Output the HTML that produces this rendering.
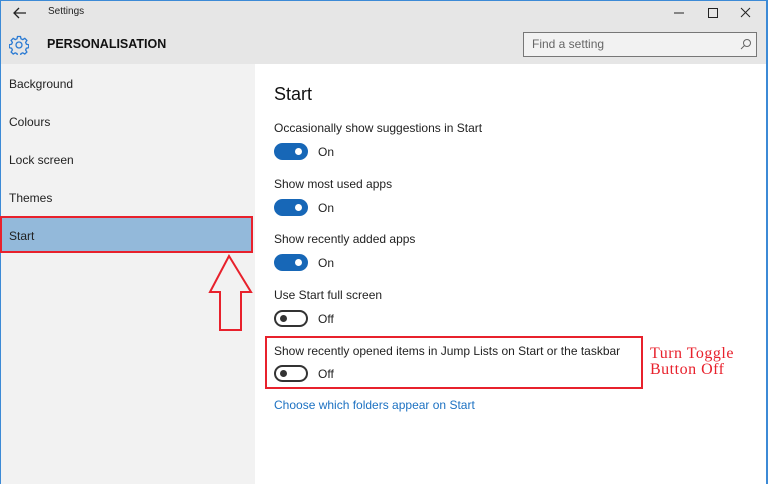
<!DOCTYPE html>
<html><head><style>
body{margin:0;width:768px;height:484px;position:relative;overflow:hidden;font-family:"Liberation Sans",sans-serif;background:#fff}
.a{position:absolute;white-space:nowrap}
.tg{position:absolute;width:34px;height:17px;border-radius:9px;box-sizing:border-box}
.on{background:#1767b7;border:2px solid #1767b7}
.on::after{content:"";position:absolute;right:4px;top:3px;width:7px;height:7px;border-radius:50%;background:#fff}
.off{border:2px solid #333;background:#fff}
.off::after{content:"";position:absolute;left:4px;top:3px;width:7px;height:7px;border-radius:50%;background:#333}
.lb{font-size:12px;color:#222}
.st{font-size:12px;color:#222}
</style></head><body>
<div class="a" style="left:0;top:0;width:768px;height:64px;background:#e6e6e6"></div>
<div class="a" style="left:0;top:64px;width:255px;height:420px;background:#f2f2f2"></div>
<div class="a" style="left:0;top:0;width:1px;height:484px;background:#3c8ad6"></div>
<div class="a" style="left:766px;top:0;width:2px;height:484px;background:#3c8ad6"></div>
<div class="a" style="left:0;top:0;width:768px;height:1px;background:#3c8ad6"></div>
<svg class="a" style="left:12px;top:6px" width="16" height="14"><path d="M2 7H14M7 2L2 7L7 12" stroke="#222" stroke-width="1.3" fill="none"/></svg>
<div class="a" style="left:48px;top:6px;font-size:10px;color:#222">Settings</div>
<svg class="a" style="left:672px;top:6px" width="90" height="14"><path d="M2 7H12" stroke="#222"/><rect x="36.5" y="2.5" width="9" height="9" fill="none" stroke="#222"/><path d="M69 2L78 11M78 2L69 11" stroke="#222"/></svg>
<svg class="a" style="left:9px;top:35px" width="20" height="20" viewBox="0 0 20 20"><circle cx="10" cy="10" r="3" fill="none" stroke="#2a7ad3" stroke-width="1.3"/><path d="M8.5 1.5h3l.5 2.3 1.8.8 2-1.3 2.1 2.1-1.3 2 .8 1.8 2.3.5v3l-2.3.5-.8 1.8 1.3 2-2.1 2.1-2-1.3-1.8.8-.5 2.3h-3l-.5-2.3-1.8-.8-2 1.3-2.1-2.1 1.3-2-.8-1.8-2.3-.5v-3l2.3-.5.8-1.8-1.3-2 2.1-2.1 2 1.3 1.8-.8z" fill="none" stroke="#2a7ad3" stroke-width="1.3"/></svg>
<div class="a" style="left:47px;top:37px;font-size:12.5px;font-weight:bold;color:#111">PERSONALISATION</div>
<div class="a" style="left:523px;top:32px;width:234px;height:25px;box-sizing:border-box;border:1px solid #777;background:#f2f2f2"></div>
<div class="a" style="left:532px;top:37px;font-size:12px;color:#666">Find a setting</div>
<svg class="a" style="left:740px;top:38px" width="12" height="12"><circle cx="7" cy="5" r="3.5" fill="none" stroke="#666"/><path d="M4.5 7.5L1 11" stroke="#666"/></svg>
<div class="a st" style="left:9px;top:77px">Background</div>
<div class="a st" style="left:9px;top:115px">Colours</div>
<div class="a st" style="left:9px;top:153px">Lock screen</div>
<div class="a st" style="left:9px;top:191px">Themes</div>
<div class="a" style="left:0;top:216px;width:253px;height:37px;box-sizing:border-box;border:2px solid #e8212c;background:#93b9da"></div>
<div class="a st" style="left:9px;top:229px">Start</div>
<svg class="a" style="left:205px;top:252px" width="50" height="82"><path d="M24 4L5 40H15V78H36V40H46Z" fill="none" stroke="#e8212c" stroke-width="2"/></svg>
<div class="a" style="left:274px;top:84px;font-size:18px;color:#111">Start</div>
<div class="a lb" style="left:274px;top:121px">Occasionally show suggestions in Start</div>
<div class="tg on" style="left:274px;top:143px"></div><div class="a lb" style="left:318px;top:145px">On</div>
<div class="a lb" style="left:274px;top:177px">Show most used apps</div>
<div class="tg on" style="left:274px;top:199px"></div><div class="a lb" style="left:318px;top:201px">On</div>
<div class="a lb" style="left:274px;top:232px">Show recently added apps</div>
<div class="tg on" style="left:274px;top:254px"></div><div class="a lb" style="left:318px;top:256px">On</div>
<div class="a lb" style="left:274px;top:288px">Use Start full screen</div>
<div class="tg off" style="left:274px;top:310px"></div><div class="a lb" style="left:318px;top:312px">Off</div>
<div class="a" style="left:265px;top:336px;width:378px;height:53px;box-sizing:border-box;border:2px solid #e8212c"></div>
<div class="a lb" style="left:274px;top:344px">Show recently opened items in Jump Lists on Start or the taskbar</div>
<div class="tg off" style="left:274px;top:365px"></div><div class="a lb" style="left:318px;top:367px">Off</div>
<div class="a" style="left:650px;top:346px;font-family:'Liberation Serif',serif;font-size:16px;letter-spacing:0.5px;line-height:16px;color:#e8212c">Turn Toggle<br>Button Off</div>
<div class="a" style="left:274px;top:398px;font-size:12px;color:#1c71c2">Choose which folders appear on Start</div>
</body></html>
